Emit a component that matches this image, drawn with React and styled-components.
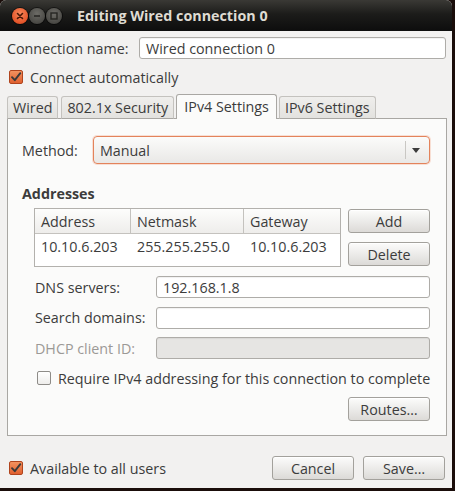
import React from "react";
import styled, { createGlobalStyle } from "styled-components";

const Global = createGlobalStyle`
  html, body { margin: 0; padding: 0; background: #1a0d0a; }
  body { font-family: "Open Sans", "DejaVu Sans", sans-serif; font-size: 14.3px; color: #3c3c3c; }
  * { box-sizing: border-box; }
`;

const Win = styled.div`
  width: 452px;
  height: 488px;
  background: #f2f1f0;
  border-radius: 6px 6px 0 0;
  overflow: hidden;
  display: flex;
  flex-direction: column;
`;

const TitleBar = styled.div`
  height: 31px;
  flex: none;
  background: linear-gradient(#3a3935 0%, #1c1c1a 45%, #0d0d0d 100%);
  display: flex;
  align-items: center;
  padding-left: 12px;
`;

const Circle = styled.div`
  width: 16px;
  height: 16px;
  border-radius: 50%;
  margin-right: 1px;
  display: flex;
  align-items: center;
  justify-content: center;
  background: ${(p) =>
    p.$close
      ? "radial-gradient(circle at 50% 35%, #f7875a, #e4552a 70%, #b9401c)"
      : "radial-gradient(circle at 50% 35%, #6c6b66, #4b4a46 70%, #363532)"};
  box-shadow: 0 0 0 1px rgba(0,0,0,0.5);
`;

const Title = styled.div`
  margin-left: 14px;
  color: #dfdbd2;
  font-weight: bold;
  font-size: 14.3px;
`;

const Body = styled.div`
  flex: 1;
  display: flex;
  flex-direction: column;
  padding: 6px 5px 0 7px;
`;

const Row = styled.div`
  display: flex;
  align-items: center;
  height: ${(p) => p.$h || 22}px;
  margin-top: ${(p) => p.$mt || 0}px;
  margin-left: ${(p) => p.$ml || 0}px;
`;

const Label = styled.div`
  width: ${(p) => (p.$w ? p.$w + "px" : "auto")};
  flex: none;
  color: ${(p) => (p.$disabled ? "#9b9996" : "#3c3c3c")};
  white-space: nowrap;
`;

const Entry = styled.div`
  flex: 1;
  height: 22px;
  border: 1px solid #aeaca8;
  border-radius: 3px;
  background: ${(p) => (p.$disabled ? "#e6e5e3" : "#ffffff")};
  box-shadow: inset 0 1px 1px rgba(0,0,0,0.06);
  display: flex;
  align-items: center;
  padding-left: 6px;
  margin-right: ${(p) => p.$mr || 0}px;
  color: #3c3c3c;
`;

const CheckBox = styled.div`
  width: 14px;
  height: 14px;
  flex: none;
  border-radius: 2px;
  margin-left: ${(p) => p.$ml || 2}px;
  margin-right: 7px;
  display: flex;
  align-items: center;
  justify-content: center;
  ${(p) =>
    p.$checked
      ? `background: linear-gradient(#f2925f, #e0602f); border: 1px solid #b0441d;`
      : `background: linear-gradient(#ffffff, #eeedeb); border: 1px solid #8e8c88;`}
`;

const Notebook = styled.div`
  margin-top: 10px;
  display: flex;
  flex-direction: column;
`;

const TabStrip = styled.div`
  height: 25px;
  display: flex;
  align-items: flex-end;
  gap: 3px;
  position: relative;
  z-index: 1;
`;

const Tab = styled.div`
  height: ${(p) => (p.$active ? 25 : 23)}px;
  padding: 0 ${(p) => (p.$active ? 7 : 5)}px;
  margin: 0 ${(p) => (p.$active ? -1 : 0)}px;
  border: 1px solid ${(p) => (p.$active ? "#a9a7a3" : "#c4c2be")};
  border-bottom: ${(p) => (p.$active ? "none" : "1px solid #a9a7a3")};
  border-radius: 3px 3px 0 0;
  background: ${(p) => (p.$active ? "#fbfbfa" : "linear-gradient(#efeeec, #e3e2df)")};
  display: flex;
  align-items: center;
  padding-bottom: ${(p) => (p.$active ? 1 : 0)}px;
  white-space: nowrap;
`;

const Panel = styled.div`
  margin-top: -1px;
  width: 440px;
  height: 318px;
  border: 1px solid #a9a7a3;
  background: #fbfbfa;
  padding: 17px 16px 0 14px;
  display: flex;
  flex-direction: column;
`;

const Combo = styled.div`
  flex: 1;
  height: 28px;
  border: 1px solid #e3835b;
  border-radius: 4px;
  background: linear-gradient(#fbfbfa, #e9e8e6);
  box-shadow: 0 0 0 1px rgba(240, 140, 100, 0.25);
  display: flex;
  align-items: center;
  padding-left: 6px;
`;

const ComboText = styled.div`
  flex: 1;
`;

const ComboSep = styled.div`
  width: 1px;
  height: 18px;
  background: #c9c7c3;
  margin-right: 6px;
`;

const Arrow = styled.div`
  width: 0;
  height: 0;
  border-left: 4px solid transparent;
  border-right: 4px solid transparent;
  border-top: 5px solid #3c3c3c;
  margin-right: 9px;
`;

const Heading = styled.div`
  font-weight: bold;
  margin-top: 21px;
  height: 17px;
  line-height: 17px;
`;

const Indent = styled.div`
  margin-left: 12px;
  display: flex;
  flex-direction: column;
`;

const AddrRow = styled.div`
  margin-top: 6px;
  display: flex;
  gap: 7px;
`;

const Table = styled.div`
  width: 307px;
  height: 59px;
  border: 1px solid #b3b1ad;
  background: #ffffff;
  display: grid;
  grid-template-columns: 96px 113px 1fr;
  grid-template-rows: 25px 1fr;
`;

const HeadCell = styled.div`
  background: linear-gradient(#fdfdfc, #eeedeb);
  border-bottom: 1px solid #c4c2be;
  border-right: ${(p) => (p.$last ? "none" : "1px solid #c4c2be")};
  display: flex;
  align-items: center;
  padding-left: 6px;
`;

const Cell = styled.div`
  padding: 3px 0 0 6px;
  height: 22px;
  display: flex;
  align-items: center;
  white-space: nowrap;
`;

const ButtonCol = styled.div`
  width: 82px;
  display: flex;
  flex-direction: column;
  gap: 9px;
  padding-top: 1px;
`;

const Button = styled.div`
  width: 82px;
  height: 24px;
  flex: none;
  border: 1px solid #a3a19c;
  border-radius: 3px;
  background: linear-gradient(#fcfcfb, #e9e8e6 60%, #dcdad7);
  box-shadow: inset 0 1px 0 #ffffff;
  display: flex;
  align-items: center;
  justify-content: center;
`;

const FormGrid = styled.div`
  margin-top: 9px;
  display: grid;
  grid-template-columns: 122px 1fr;
  grid-auto-rows: 22px;
  row-gap: 8.5px;
  align-items: center;
`;

const FormLabel = styled(Label)`
  padding-left: 1px;
`;

const RightRow = styled.div`
  display: flex;
  justify-content: flex-end;
  margin-top: ${(p) => p.$mt || 0}px;
`;

const Footer = styled.div`
  margin-top: 20px;
  height: 24px;
  display: flex;
  align-items: center;
  padding-right: 2px;
`;

const Spacer = styled.div`
  flex: 1;
`;

const Buttons = styled.div`
  display: flex;
  gap: 9px;
`;

const Check = () => (
  <svg width="12" height="12" viewBox="0 0 12 12">
    <path d="M2 6.2 L4.8 9.2 L10.3 2.2" fill="none" stroke="#3a3a3a" strokeWidth="1.9" strokeLinecap="round" strokeLinejoin="round" />
  </svg>
);

export default function App() {
  return (
    <>
      <Global />
      <Win>
        <TitleBar>
          <Circle $close>
            <svg width="8" height="8" viewBox="0 0 8 8">
              <path d="M1.5 1.5 L6.5 6.5 M6.5 1.5 L1.5 6.5" stroke="#4a1706" strokeWidth="1.6" strokeLinecap="round" />
            </svg>
          </Circle>
          <Circle>
            <svg width="8" height="8" viewBox="0 0 8 8">
              <path d="M1 4 L7 4" stroke="#262522" strokeWidth="1.6" />
            </svg>
          </Circle>
          <Circle>
            <svg width="8" height="8" viewBox="0 0 8 8">
              <rect x="1" y="1" width="6" height="6" fill="none" stroke="#262522" strokeWidth="1.4" />
            </svg>
          </Circle>
          <Title>Editing Wired connection 0</Title>
        </TitleBar>
        <Body>
          <Row>
            <Label $w={132}>Connection name:</Label>
            <Entry $mr={1}>Wired connection 0</Entry>
          </Row>
          <Row $h={14} $mt={11}>
            <CheckBox $checked><Check /></CheckBox>
            <Label>Connect automatically</Label>
          </Row>
          <Notebook>
            <TabStrip>
              <Tab>Wired</Tab>
              <Tab>802.1x Security</Tab>
              <Tab $active>IPv4 Settings</Tab>
              <Tab>IPv6 Settings</Tab>
            </TabStrip>
            <Panel>
              <Row $h={28}>
                <Label $w={71}>Method:</Label>
                <Combo>
                  <ComboText>Manual</ComboText>
                  <ComboSep />
                  <Arrow />
                </Combo>
              </Row>
              <Heading>Addresses</Heading>
              <Indent>
                <AddrRow>
                  <Table>
                    <HeadCell>Address</HeadCell>
                    <HeadCell>Netmask</HeadCell>
                    <HeadCell $last>Gateway</HeadCell>
                    <Cell>10.10.6.203</Cell>
                    <Cell>255.255.255.0</Cell>
                    <Cell>10.10.6.203</Cell>
                  </Table>
                  <ButtonCol>
                    <Button>Add</Button>
                    <Button>Delete</Button>
                  </ButtonCol>
                </AddrRow>
                <FormGrid>
                  <FormLabel>DNS servers:</FormLabel>
                  <Entry>192.168.1.8</Entry>
                  <FormLabel>Search domains:</FormLabel>
                  <Entry />
                  <FormLabel $disabled>DHCP client ID:</FormLabel>
                  <Entry $disabled />
                </FormGrid>
                <Row $h={14} $mt={12}>
                  <CheckBox $ml={3} />
                  <Label>Require IPv4 addressing for this connection to complete</Label>
                </Row>
                <RightRow $mt={12}>
                  <Button>Routes…</Button>
                </RightRow>
              </Indent>
            </Panel>
          </Notebook>
          <Footer>
            <CheckBox $checked><Check /></CheckBox>
            <Label>Available to all users</Label>
            <Spacer />
            <Buttons>
              <Button>Cancel</Button>
              <Button>Save…</Button>
            </Buttons>
          </Footer>
        </Body>
      </Win>
    </>
  );
}
